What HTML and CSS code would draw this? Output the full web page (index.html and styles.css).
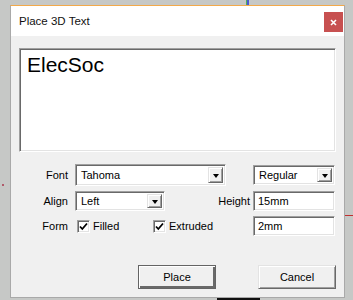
FILE: index.html
```html
<html>
<head>
<title>Place 3D Text</title>
<link rel="stylesheet" href="styles.css">
</head>
<body>
<div class="canvas">
<div class="mark mark-axis"></div>
<div class="mark mark-dots"></div>
<div class="mark mark-wire"></div>
<div class="mark mark-pad"></div>
</div>

<div class="dialog">
<div class="titlebar">
<span class="title">Place 3D Text</span>
<span class="close"><svg width="7" height="7" viewBox="0 0 7 7"><path d="M1 1L6 6M6 1L1 6" stroke="#fff" stroke-width="1.6"/></svg></span>
</div>

<div class="content">
<div class="textbox">ElecSoc</div>

<div class="row row-font">
<span class="lbl">Font</span>
<div class="combo combo-font"><span class="val">Tahoma</span><span class="drop"><i></i></span></div>
<div class="combo combo-style"><span class="val">Regular</span><span class="drop"><i></i></span></div>
</div>

<div class="row">
<span class="lbl">Align</span>
<div class="combo combo-align"><span class="val">Left</span><span class="drop"><i></i></span></div>
<span class="lbl-right">Height</span>
<div class="edit">15mm</div>
</div>

<div class="row">
<span class="lbl">Form</span>
<label class="check check-filled"><span class="box"><svg width="9" height="9" viewBox="0 0 9 9"><path d="M1 4.5L3.3 7L8 1.5" fill="none" stroke="#000" stroke-width="1.8"/></svg></span>Filled</label>
<label class="check"><span class="box"><svg width="9" height="9" viewBox="0 0 9 9"><path d="M1 4.5L3.3 7L8 1.5" fill="none" stroke="#000" stroke-width="1.8"/></svg></span>Extruded</label>
<div class="edit">2mm</div>
</div>

<div class="buttons">
<button class="btn btn-default">Place</button>
<button class="btn">Cancel</button>
</div>
</div>
</div>
</body>
</html>
```

FILE: styles.css
```css
body {
margin: 0;
background: #c6c8c6;
font-family: "Liberation Sans", Arial, sans-serif;
font-size: 11px;
color: #000;
}

.canvas .mark {
position: absolute;
}

.mark-axis {
left: 246px;
top: 0;
width: 2px;
height: 5px;
background: #4a5ad0;
border-left: 1px solid #4fae5a;
}

.mark-dots {
left: 2px;
top: 184px;
width: 6px;
height: 2px;
border-left: 2px solid #b05a6a;
border-right: 2px solid #b05a6a;
}

.mark-wire {
left: 345px;
top: 215px;
width: 8px;
height: 1px;
background: #c03030;
}

.mark-pad {
left: 217px;
top: 297px;
width: 43px;
height: 3px;
background: #111;
}

.dialog {
position: relative;
margin: 5px 0 0 10px;
width: 333px;
height: 291px;
background: #f0f0f0;
border: 1px solid #a9a9a9;
border-top: 1px solid #f2a94a;
}

.titlebar {
height: 30px;
background: #fff;
display: flex;
align-items: center;
justify-content: space-between;
padding: 0 1px 0 8px;
}

.title {
font-size: 11.5px;
color: #111;
margin-top: -1px;
}

.close {
width: 19px;
height: 20px;
background: #c75050;
display: flex;
align-items: center;
justify-content: center;
margin-top: 2px;
}

.content {
padding: 12px 7px 0 8px;
}

.textbox {
width: 308px;
height: 98px;
background: #fff;
border: 1px solid;
border-color: #a0a0a0 #fff #fff #a0a0a0;
box-shadow: inset 1px 1px #696969, inset -1px -1px #e3e3e3;
font-size: 21px;
line-height: 24px;
padding: 4px 0 0 7px;
}

.row {
display: flex;
align-items: center;
height: 20px;
margin-top: 5px;
width: 324px;
margin-left: -8px;
}

.row-font {
height: 22px;
margin-top: 12px;
}

.lbl {
width: 57px;
padding-right: 7px;
text-align: right;
}

.lbl-right {
margin-left: auto;
margin-right: 3px;
}

.combo {
display: flex;
align-items: center;
background: #fff;
border: 1px solid;
border-color: #a0a0a0 #fff #fff #a0a0a0;
box-shadow: inset 1px 1px #696969, inset -1px -1px #e3e3e3;
padding: 2px;
box-sizing: border-box;
}

.combo .val {
flex: 1;
padding-left: 3px;
}

.combo-font {
width: 151px;
height: 22px;
}

.combo-style {
width: 82px;
height: 20px;
margin-left: auto;
}

.combo-align {
width: 90px;
height: 20px;
}

.drop {
width: 15px;
height: 100%;
background: #f0f0f0;
border: 1px solid;
border-color: #e3e3e3 #696969 #696969 #e3e3e3;
box-shadow: inset 1px 1px #fff, inset -1px -1px #a0a0a0;
box-sizing: border-box;
display: flex;
align-items: center;
justify-content: center;
}

.drop i {
width: 0;
height: 0;
border-left: 3.5px solid transparent;
border-right: 3.5px solid transparent;
border-top: 4px solid #000;
margin-top: 1px;
}

.edit {
width: 82px;
height: 20px;
margin-left: auto;
box-sizing: border-box;
background: #fff;
border: 1px solid;
border-color: #a0a0a0 #fff #fff #a0a0a0;
box-shadow: inset 1px 1px #696969, inset -1px -1px #e3e3e3;
padding: 3px 0 0 4px;
}

.row .lbl-right + .edit {
margin-left: 0;
}

.check {
display: flex;
align-items: center;
}

.check-filled {
margin-left: 2px;
width: 76px;
}

.box {
width: 13px;
height: 13px;
box-sizing: border-box;
background: #fff;
border: 1px solid;
border-color: #a0a0a0 #fff #fff #a0a0a0;
box-shadow: inset 1px 1px #696969, inset -1px -1px #e3e3e3;
display: flex;
align-items: center;
justify-content: center;
margin-right: 3px;
}

.buttons {
display: flex;
justify-content: flex-end;
gap: 42px;
margin-top: 29px;
padding-right: 1px;
}

.btn {
width: 78px;
height: 24px;
background: #f0f0f0;
font-family: "Liberation Sans", Arial, sans-serif;
font-size: 11px;
color: #000;
border: 1px solid;
border-color: #e3e3e3 #696969 #696969 #e3e3e3;
box-shadow: inset 1px 1px #fff, inset -1px -1px #a0a0a0;
padding: 0;
}

.btn-default {
border: 1px solid #646464;
box-shadow: inset 1px 1px #fff, inset -2px -2px #696969;
}
```
